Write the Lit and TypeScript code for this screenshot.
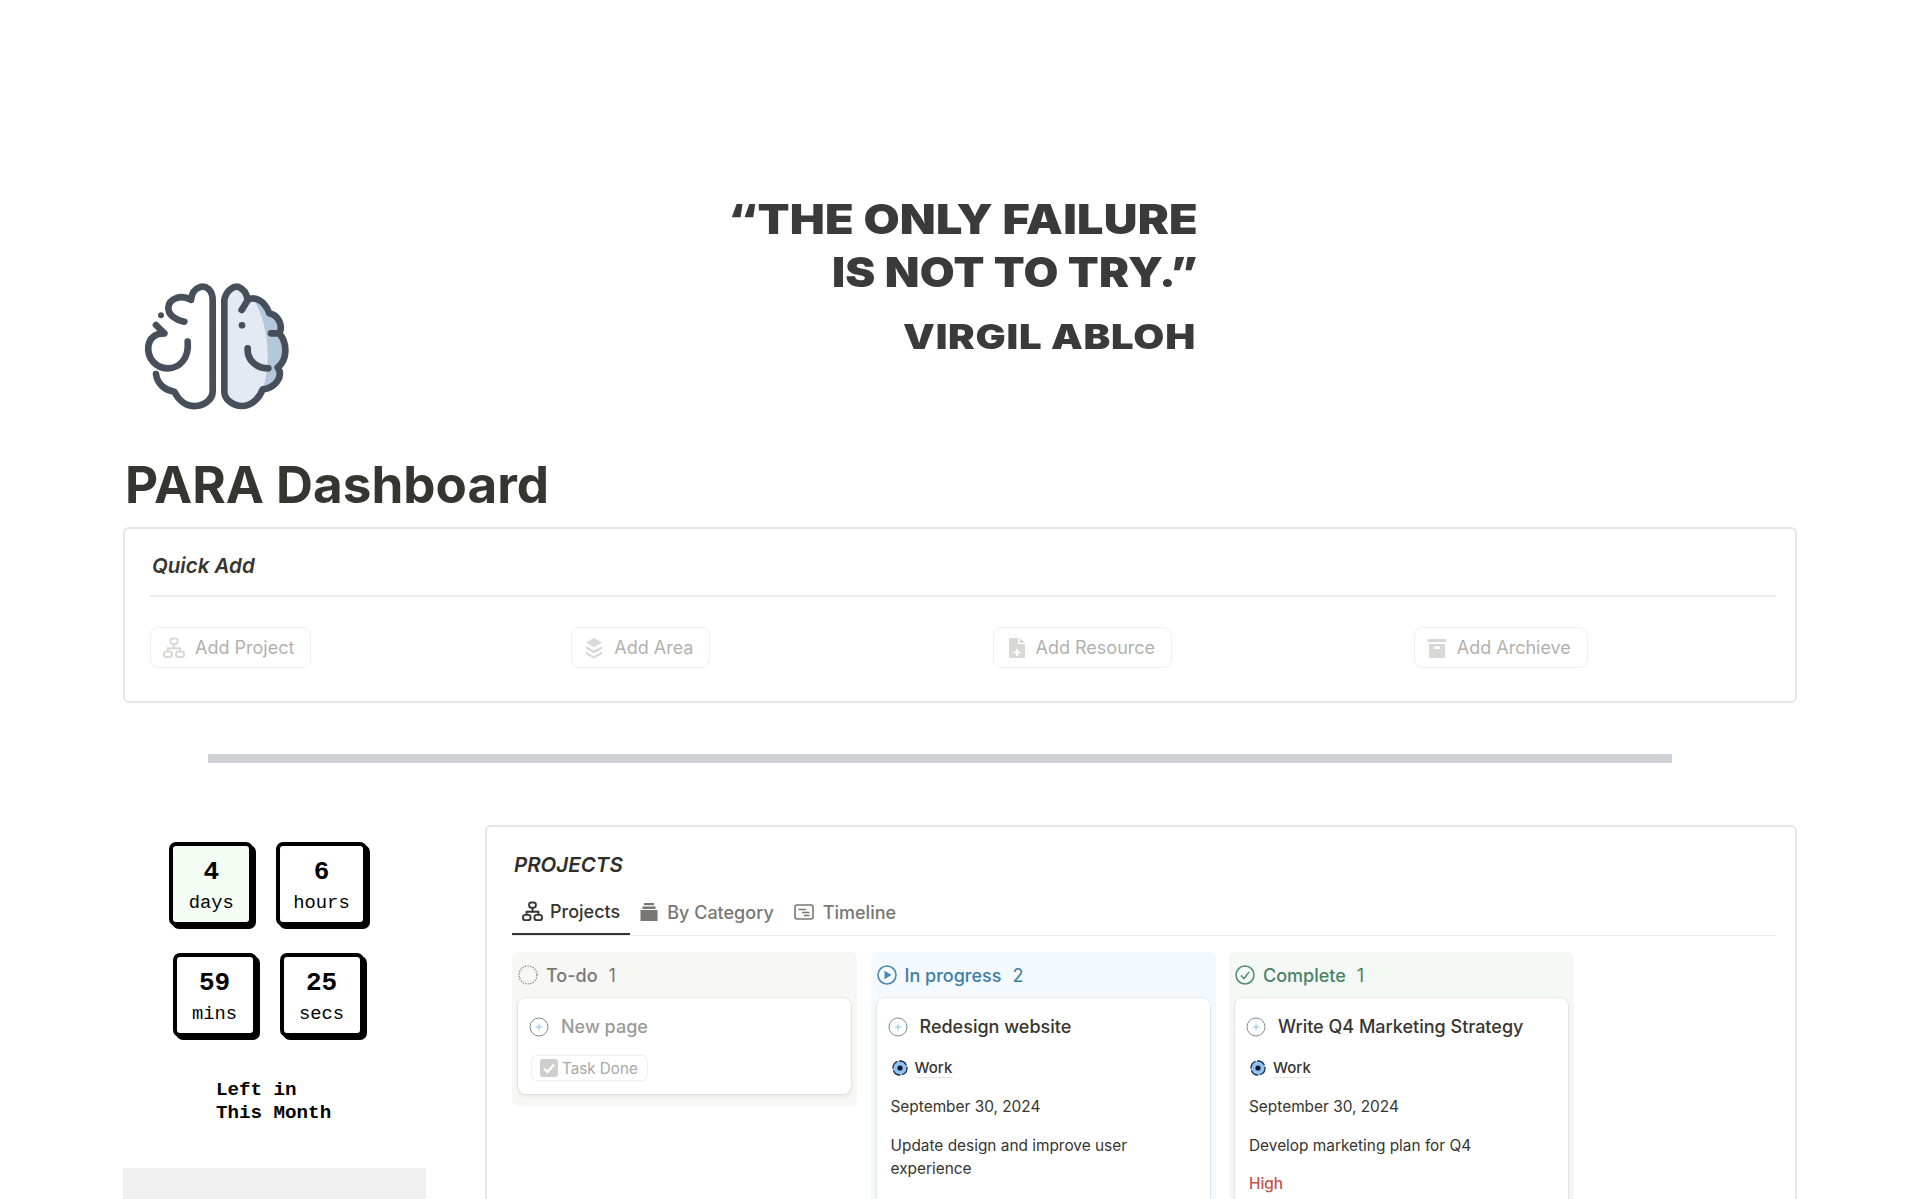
import { css, html, LitElement } from "lit";
import { customElement } from "lit/decorators.js";

const treeIcon = (color: string, size: number) => html`
  <svg width=${size} height=${size} viewBox="0 0 22 22" fill="none" stroke=${color} stroke-width="2">
    <rect x="7.5" y="1.5" width="7" height="5.5" rx="2.2"></rect>
    <path d="M11 7v4M4.8 14.5v-3.2h12.4v3.2"></path>
    <rect x="1" y="14.5" width="8" height="5.5" rx="2.5"></rect>
    <rect x="13" y="14.5" width="8" height="5.5" rx="2.5"></rect>
  </svg>
`;

const layersIcon = html`
  <svg width="20" height="22" viewBox="0 0 20 22" fill="#d9d8d4">
    <path d="M10 1l8 4.6-8 4.6-8-4.6z"></path>
    <path d="M2 9l8 4.6L18 9v2.8l-8 4.6-8-4.6z"></path>
    <path d="M2 14.6l8 4.6 8-4.6v2.6L10 21.5 2 17.2z"></path>
  </svg>
`;

const docIcon = html`
  <svg width="20" height="20" viewBox="-2 0 20 20" fill="#d9d8d4">
    <path d="M1 0h9v6h7v14H1z"></path>
    <path d="M11.5 0L17 4.8h-5.5z"></path>
    <path d="M8 11h2v2.5h2.5v2H10V18H8v-2.5H5.5v-2H8z" fill="#fff"></path>
  </svg>
`;

const archiveIcon = html`
  <svg width="20" height="20" viewBox="0 0 20 20" fill="#d9d8d4">
    <rect x="0.5" y="1" width="19" height="3"></rect>
    <path d="M2 6h16v14H2z"></path>
    <rect x="7" y="8.5" width="6" height="2.5" fill="#fff"></rect>
  </svg>
`;

const stackIcon = html`
  <svg width="18" height="20" viewBox="0 0 18 20" fill="#787774">
    <rect x="4" y="1" width="10" height="2.2"></rect>
    <rect x="2.5" y="4.5" width="13" height="2.5"></rect>
    <rect x="0.5" y="8" width="17" height="11"></rect>
  </svg>
`;

const timelineIcon = html`
  <svg width="20" height="18" viewBox="0 0 20 18" fill="none" stroke="#787774" stroke-width="1.6">
    <rect x="1" y="2" width="18" height="14" rx="2"></rect>
    <path d="M4.5 6.5h7.5M8 9.5h7.5M10 12.5h5.5"></path>
  </svg>
`;

const pageIcon = html`
  <svg class="page-icon" width="20" height="20" viewBox="0 0 20 20" fill="none">
    <circle cx="10" cy="10" r="9" stroke="#7f8a97" stroke-width="1"></circle>
    <path d="M10 6.5v7M6.5 10h7" stroke="#8cc4ee" stroke-width="1"></path>
  </svg>
`;

const workIcon = html`
  <svg width="16" height="16" viewBox="0 0 16 16">
    <circle cx="8" cy="8" r="7" fill="#8fc1f2" stroke="#1f2f4a" stroke-width="1.3" stroke-dasharray="9 1.6"></circle>
    <circle cx="8" cy="8" r="2.6" fill="#101828"></circle>
  </svg>
`;

const todoIcon = html`
  <svg width="20" height="20" viewBox="0 0 20 20" fill="none">
    <circle cx="10" cy="10" r="9" stroke="#787774" stroke-width="1.2" stroke-dasharray="1.3 1.3"></circle>
  </svg>
`;

const progressIcon = html`
  <svg width="20" height="20" viewBox="0 0 20 20" fill="none">
    <circle cx="10" cy="10" r="9" stroke="#4a88ad" stroke-width="1.6"></circle>
    <path d="M7.5 5.8l7 4.2-7 4.2z" fill="#4a88ad"></path>
  </svg>
`;

const completeIcon = html`
  <svg width="20" height="20" viewBox="0 0 20 20" fill="none">
    <circle cx="10" cy="10" r="9" stroke="#4f8a6c" stroke-width="1.5"></circle>
    <path d="M6 10.5l3 3 5.2-6.6" stroke="#4f8a6c" stroke-width="1.5"></path>
  </svg>
`;

const brainLogo = html`
  <svg class="logo" width="170" height="150" viewBox="0 0 510 450" fill="none" stroke="#474f5a" stroke-width="20" stroke-linecap="round" stroke-linejoin="round">
    <path stroke="none" fill="#e4eaf3" d="M280 90C285 60 310 45 325 52C340 58 347 70 350 90C370 78 400 90 415 130C440 135 458 165 445 190C470 220 470 270 440 292C460 320 430 355 395 358C385 385 360 410 330 408C300 405 280 385 280 365Z"></path>
    <path stroke="none" fill="#b4c8dc" d="M372 95C395 90 405 105 415 130C440 135 458 165 445 190C470 220 470 270 440 292C460 320 430 355 395 358C420 290 415 170 372 95Z"></path>
    <path d="M75 312C78 340 100 360 130 365C145 395 170 410 195 408C225 405 245 385 245 365V90C245 60 225 45 205 52C190 57 182 72 180 90C150 72 115 85 112 112C110 135 135 150 160 155"></path>
    <path d="M170 215C175 265 145 295 110 295C75 295 48 265 52 228C55 205 72 190 100 190M75 165L100 190"></path>
    <path d="M280 90V365C280 385 300 405 330 408C360 410 385 385 395 358C430 355 460 320 440 292C470 270 470 220 445 190C458 165 440 135 415 130C400 90 370 78 350 90C347 70 340 58 325 52C310 45 285 60 280 90Z"></path>
    <path d="M350 90C345 100 338 110 332 120M445 190L420 190M350 235C348 270 375 295 412 295"></path>
    <circle cx="90" cy="136" r="9" fill="#474f5a" stroke="none"></circle>
    <circle cx="333" cy="166" r="10" fill="#474f5a" stroke="none"></circle>
  </svg>
`;

@customElement("app-root")
export class AppRoot extends LitElement {
  render() {
    return html`
      <div class="page">
        <header class="hero">
          ${brainLogo}
          <div class="quote">
            <div class="quote-line">“THE ONLY FAILURE</div>
            <div class="quote-line narrow">IS NOT TO TRY.”</div>
            <div class="quote-author">VIRGIL ABLOH</div>
          </div>
        </header>

        <h1 class="title">PARA Dashboard</h1>

        <section class="quick">
          <div class="quick-title">Quick Add</div>
          <div class="quick-grid">
            <div><span class="add-btn">${treeIcon("#d9d8d4", 22)}Add Project</span></div>
            <div><span class="add-btn">${layersIcon}Add Area</span></div>
            <div><span class="add-btn">${docIcon}Add Resource</span></div>
            <div><span class="add-btn">${archiveIcon}Add Archieve</span></div>
          </div>
        </section>

        <div class="bar"></div>

        <div class="main">
          <aside class="side">
            <div class="timer-row">
              <div class="tile green"><b>4</b><span>days</span></div>
              <div class="tile"><b>6</b><span>hours</span></div>
            </div>
            <div class="timer-row second">
              <div class="tile"><b>59</b><span>mins</span></div>
              <div class="tile"><b>25</b><span>secs</span></div>
            </div>
            <div class="left-in">Left in<br />This Month</div>
            <div class="grey-block"></div>
          </aside>

          <section class="projects">
            <div class="projects-title">PROJECTS</div>
            <nav class="tabs">
              <div class="tab active">${treeIcon("#37352f", 21)}Projects</div>
              <div class="tab">${stackIcon}By Category</div>
              <div class="tab">${timelineIcon}Timeline</div>
            </nav>
            <div class="board">
              <div class="column todo">
                <div class="col-head">${todoIcon}<span>To-do</span><em>1</em></div>
                <div class="card short">
                  <div class="card-title muted">${pageIcon}New page</div>
                  <div class="chip">
                    <svg width="18" height="18" viewBox="0 0 18 18">
                      <rect width="18" height="18" rx="3" fill="#cfcecb"></rect>
                      <path d="M4 9.5l3.5 3.5L14 5.5" fill="none" stroke="#fff" stroke-width="2.4"></path>
                    </svg>
                    Task Done
                  </div>
                </div>
              </div>

              <div class="column progress">
                <div class="col-head">${progressIcon}<span>In progress</span><em>2</em></div>
                <div class="card">
                  <div class="card-title">${pageIcon}Redesign website</div>
                  <div class="work">${workIcon}<span>Work</span></div>
                  <div class="line date">September 30, 2024</div>
                  <div class="line">Update design and improve user experience</div>
                </div>
              </div>

              <div class="column complete">
                <div class="col-head">${completeIcon}<span>Complete</span><em>1</em></div>
                <div class="card">
                  <div class="card-title">${pageIcon}Write Q4 Marketing Strategy</div>
                  <div class="work">${workIcon}<span>Work</span></div>
                  <div class="line date">September 30, 2024</div>
                  <div class="line">Develop marketing plan for Q4</div>
                  <div class="line high">High</div>
                </div>
              </div>
            </div>
          </section>
        </div>
      </div>
    `;
  }

  static styles = css`
    :host {
      display: block;
      height: 1199px;
      overflow: hidden;
      background: #fff;
      font-family: Inter, "Liberation Sans", sans-serif;
      color: #37352f;
    }

    .page {
      padding: 0 123px;
    }

    .hero {
      display: flex;
      height: 454px;
    }

    .logo {
      flex: none;
      margin: 270px 0 0 8px;
    }

    .quote {
      margin: 193px 0 0 433px;
      width: 464px;
      text-align: right;
      color: #3a3a3a;
      font-weight: 900;
      white-space: nowrap;
      filter: blur(0.6px);
    }

    .quote-line {
      font-size: 41px;
      line-height: 53px;
      letter-spacing: 0.2px;
      transform: scaleX(1.14);
      transform-origin: right;
    }

    .quote-line.narrow {
      transform: scaleX(1.1);
    }

    .quote-author {
      margin: 15px 2px 0 0;
      font-size: 34px;
      line-height: 45px;
      letter-spacing: 0.6px;
      transform: scaleX(1.18);
      transform-origin: right;
    }

    .title {
      margin: 0;
      padding-left: 2px;
      font-size: 51.2px;
      line-height: 60px;
      font-weight: 700;
    }

    .quick {
      margin-top: 13px;
      height: 176px;
      box-sizing: border-box;
      padding: 0 19px 0 25px;
      border: 2px solid #e6e6e4;
      border-radius: 6px;
    }

    .quick-title {
      height: 68px;
      box-sizing: border-box;
      padding: 25px 0 0 2px;
      margin-bottom: 30px;
      border-bottom: 2px solid #ebebea;
      font-size: 20.5px;
      line-height: 24px;
      font-weight: 600;
      font-style: italic;
    }

    .quick-grid {
      display: grid;
      grid-template-columns: repeat(4, 1fr);
      gap: 59px;
    }

    .add-btn {
      display: inline-flex;
      align-items: center;
      gap: 10px;
      height: 41px;
      box-sizing: border-box;
      padding: 0 16px 0 12px;
      border: 1px solid #f0f0ee;
      border-radius: 8px;
      font-size: 18px;
      color: #b2b1ad;
    }

    .bar {
      height: 9px;
      margin: 51px 125px 0 85px;
      background: #d0d1d6;
    }

    .main {
      display: flex;
      gap: 59px;
      margin-top: 62px;
    }

    .side {
      flex: none;
      width: 303px;
      padding-top: 17px;
      font-family: "Liberation Mono", monospace;
      color: #000;
    }

    .timer-row {
      display: flex;
      justify-content: center;
      gap: 23px;
      padding-right: 13px;
    }

    .timer-row.second {
      margin-top: 27px;
    }

    .tile {
      display: flex;
      flex-direction: column;
      align-items: center;
      box-sizing: border-box;
      min-width: 84px;
      height: 84px;
      padding: 11px 13px 0;
      border: 4px solid #000;
      border-radius: 7px;
      box-shadow: 3px 3px 0 #000;
      background: #fff;
    }

    .tile.green {
      background: #f3fdf4;
    }

    .tile b {
      font-size: 26px;
      line-height: 30px;
    }

    .tile span {
      margin-top: 1px;
      font-size: 18.8px;
      line-height: 30px;
    }

    .left-in {
      margin: 42px 0 0 93px;
      font-size: 19.2px;
      line-height: 23px;
      font-weight: 700;
    }

    .grey-block {
      height: 200px;
      margin-top: 43px;
      background: #f0f0f0;
    }

    .projects {
      flex: 1;
      min-width: 0;
      height: 600px;
      box-sizing: border-box;
      padding: 0 19px 0 25px;
      border: 2px solid #e6e6e4;
      border-radius: 6px;
    }

    .projects-title {
      padding: 26px 0 0 2px;
      font-size: 20.5px;
      line-height: 24px;
      font-weight: 600;
      font-style: italic;
      color: #2f2e2a;
    }

    .tabs {
      display: flex;
      margin-top: 18px;
      height: 40px;
      border-bottom: 1px solid #e9e9e7;
    }

    .tab {
      display: flex;
      align-items: center;
      gap: 9px;
      height: 40px;
      box-sizing: border-box;
      padding: 0 10px 6px;
      font-size: 18px;
      font-weight: 500;
      color: #787774;
    }

    .tab.active {
      gap: 7px;
      color: #37352f;
      border-bottom: 2px solid #37352f;
    }

    .board {
      display: flex;
      gap: 13.5px;
      margin-top: 16px;
    }

    .column {
      flex: none;
      width: 345px;
      box-sizing: border-box;
      padding: 0 6px 12px;
      border-radius: 6px;
      align-self: flex-start;
    }

    .column.todo {
      background: #f7f7f5;
    }

    .column.progress {
      background: #f3f9fc;
      height: 320px;
    }

    .column.complete {
      background: #f5f9f6;
      height: 320px;
    }

    .col-head {
      display: flex;
      align-items: center;
      height: 46px;
      gap: 8px;
      font-size: 18px;
      font-weight: 500;
    }

    .col-head em {
      margin-left: 3px;
      font-style: normal;
      font-weight: 400;
    }

    .todo .col-head {
      color: #787774;
    }

    .progress .col-head {
      color: #3f7fa6;
    }

    .complete .col-head {
      color: #4a8266;
    }

    .card {
      box-sizing: border-box;
      height: 300px;
      padding: 0 12px 0 14px;
      background: #fff;
      border-radius: 8px;
      box-shadow: 0 0 0 1px rgba(15, 15, 15, 0.05), 0 2px 4px rgba(15, 15, 15, 0.08);
    }

    .card.short {
      height: 96px;
    }

    .card-title {
      display: flex;
      align-items: center;
      gap: 12px;
      height: 57px;
      font-size: 18px;
      font-weight: 500;
    }

    .card-title.muted {
      color: #9b9a97;
    }

    .page-icon {
      flex: none;
      margin: 1px 0 0 -3px;
    }

    .chip {
      display: inline-flex;
      align-items: center;
      gap: 4px;
      height: 24px;
      margin-left: -1px;
      padding: 0 9px 0 8px;
      border: 1px solid #efefed;
      border-radius: 6px;
      font-size: 15.2px;
      color: #a9a8a5;
    }

    .work {
      display: flex;
      align-items: center;
      gap: 7px;
      margin: 0 0 0 1px;
      height: 26px;
      font-size: 15px;
      font-weight: 500;
    }

    .work span {
      border-bottom: 1px solid #e6e6e4;
      line-height: 18px;
    }

    .line {
      margin-top: 16px;
      font-size: 15.4px;
      line-height: 23px;
    }

    .line.date {
      margin-top: 14px;
    }

    .line.high {
      margin-top: 15px;
      color: #c4554d;
      font-weight: 500;
    }
  `;
}

declare global {
  interface HTMLElementTagNameMap {
    "app-root": AppRoot;
  }
}
